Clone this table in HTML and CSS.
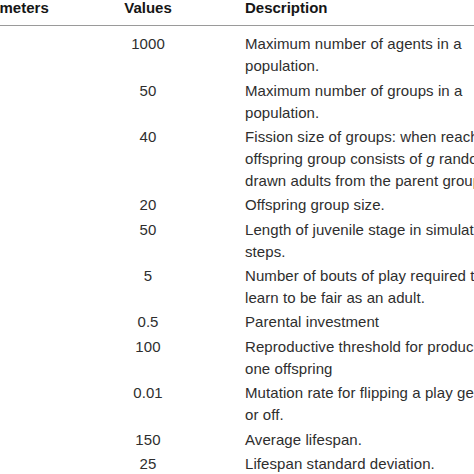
FILE: index.html
```html
<!DOCTYPE html>
<html>
<head>
<meta charset="utf-8">
<link rel="stylesheet" href="styles.css">
</head>
<body>
<table class="params">
  <colgroup>
    <col class="c-param">
    <col class="c-value">
    <col class="c-desc">
  </colgroup>
  <thead>
    <tr>
      <th class="h-param">Parameters</th>
      <th class="h-value">Values</th>
      <th class="h-desc">Description</th>
    </tr>
  </thead>
  <tbody>
    <tr class="first"><td></td><td class="val">1000</td><td class="desc">Maximum number of agents in a<br>population.</td></tr>
    <tr><td></td><td class="val">50</td><td class="desc">Maximum number of groups in a<br>population.</td></tr>
    <tr><td></td><td class="val">40</td><td class="desc">Fission size of groups: when reached, an<br>offspring group consists of <i>g</i> randomly<br>drawn adults from the parent group.</td></tr>
    <tr><td></td><td class="val">20</td><td class="desc">Offspring group size.</td></tr>
    <tr><td></td><td class="val">50</td><td class="desc">Length of juvenile stage in simulation<br>steps.</td></tr>
    <tr><td></td><td class="val">5</td><td class="desc">Number of bouts of play required to<br>learn to be fair as an adult.</td></tr>
    <tr><td></td><td class="val">0.5</td><td class="desc">Parental investment</td></tr>
    <tr><td></td><td class="val">100</td><td class="desc">Reproductive threshold for producing<br>one offspring</td></tr>
    <tr><td></td><td class="val">0.01</td><td class="desc">Mutation rate for flipping a play gene on<br>or off.</td></tr>
    <tr><td></td><td class="val">150</td><td class="desc">Average lifespan.</td></tr>
    <tr><td></td><td class="val">25</td><td class="desc">Lifespan standard deviation.</td></tr>
  </tbody>
</table>
</body>
</html>
```

FILE: styles.css
```css
html, body {
  margin: 0;
  padding: 0;
  overflow: hidden;
  background: #ffffff;
}

body {
  font-family: "Liberation Sans", Arial, Helvetica, sans-serif;
  color: #2e2e2e;
}

.params {
  border-collapse: collapse;
  table-layout: fixed;
  width: 660px;
  margin-left: -33px;
}

.c-param { width: 131px; }
.c-value { width: 100px; }
.c-desc { width: 429px; }

.params th {
  font-size: 15px;
  font-weight: bold;
  line-height: 15px;
  color: #161616;
  padding: 0 0 10px 0;
  border-bottom: 1px solid #9a9a9a;
  text-align: left;
  white-space: nowrap;
}

.params th.h-value { text-align: center; }
.params th.h-desc { padding-left: 47px; }

.params td {
  font-size: 15px;
  line-height: 22px;
  padding: 1.2px 0;
  vertical-align: top;
  white-space: nowrap;
  letter-spacing: 0.08px;
}

.params tr.first td { padding-top: 7.2px; }

.params td.val { text-align: center; }
.params td.desc { padding-left: 47px; }
```
